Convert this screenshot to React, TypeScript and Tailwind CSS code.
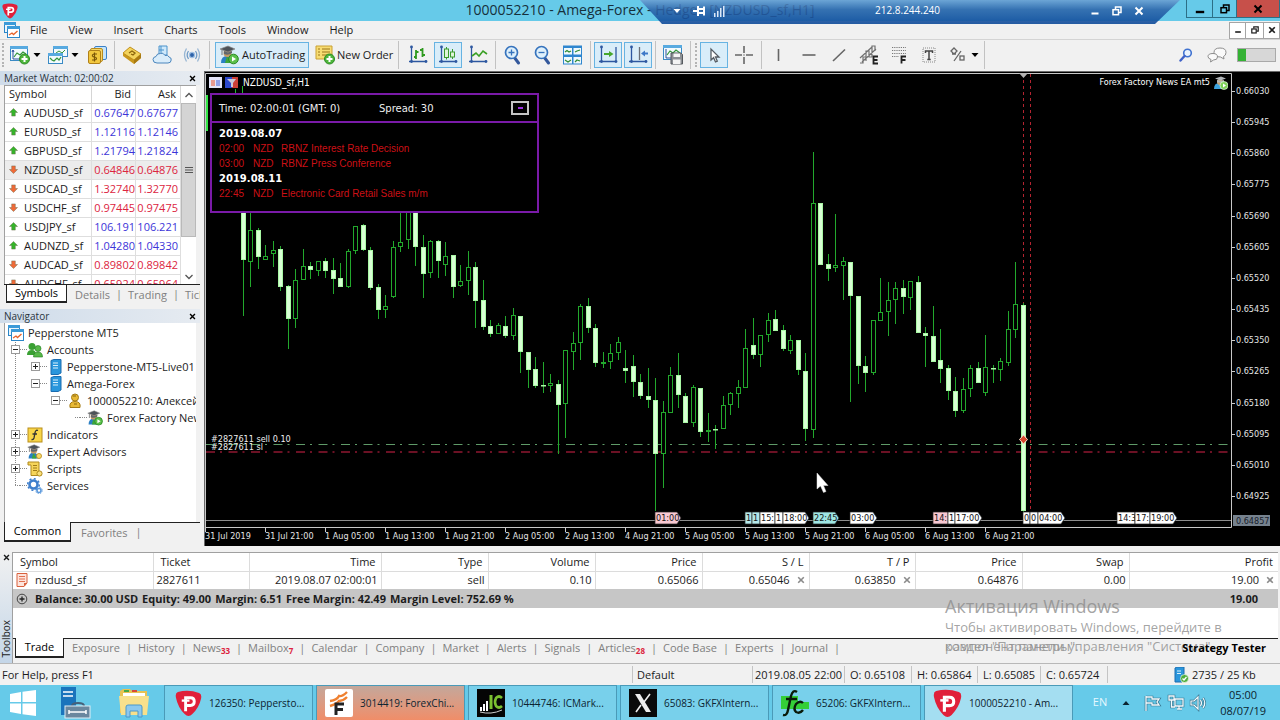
import React from "react";

type Kids = { children?: React.ReactNode };

/* ---------- icons ---------- */

function Logo({ className }: { className: string }) {
  return (
    <svg viewBox="0 0 28 28" className={className} aria-hidden="true">
      <path d="M3 2Q14-1 25 3Q28 4 27 9Q25 18 18 25Q14 29 10 25Q3 18 1 8Q0 3 3 2Z" fill="#e0203a" />
      <path d="M11 22V8H16Q20 8 20 12Q20 16 16 16H12" fill="none" stroke="#fff" strokeWidth="3" />
      <path d="M7 11H15" stroke="#fff" strokeWidth="2.4" />
    </svg>
  );
}

function MtIcon({ className }: { className: string }) {
  return (
    <svg viewBox="0 0 16 16" className={className} aria-hidden="true">
      <rect x="0.5" y="0.5" width="11" height="10" fill="#eaf6fd" stroke="#2b86c8" />
      <rect x="0" y="0" width="12" height="3" fill="#3c9ad8" />
      <rect x="3.5" y="4.5" width="12" height="11" fill="#fff" stroke="#2b86c8" />
      <rect x="3" y="4" width="13" height="3" fill="#3c9ad8" />
      <path d="M5 13L8 11L9.500 12.500L13.500 9" fill="none" stroke="#e8622a" strokeWidth="1.300" />
    </svg>
  );
}

function Caret({ className = "w-2 h-1 text-black" }: { className?: string }) {
  return (
    <svg viewBox="0 0 8 4" className={className} aria-hidden="true">
      <path d="M0.500 0H7.500L4 4Z" fill="currentColor" />
    </svg>
  );
}

function Ico({ children }: Kids) {
  return (
    <svg viewBox="0 0 20 20" className="h-5 w-5 shrink-0" aria-hidden="true">
      {children}
    </svg>
  );
}

const NewChart = () => (
  <Ico>
    <rect x="0.5" y="1.5" width="17" height="14" fill="#f2fafe" stroke="#3a8ac4" />
    <rect x="0" y="1" width="18" height="3" fill="#58aae0" />
    <path d="M3 5V14H16M2 7L3 5L4 7M14 13L16 14" fill="none" stroke="#2c4f9c" />
    <path d="M4 12L7 8L10 10L13 7L16 9" fill="none" stroke="#34963a" strokeWidth="1.200" />
    <circle cx="14.500" cy="14" r="5" fill="#4db53a" stroke="#2a8a22" />
    <path d="M14.500 11V17M11.500 14H17.500" stroke="#fff" strokeWidth="2" />
  </Ico>
);
const Profiles = () => (
  <Ico>
    <rect x="5.500" y="1.500" width="14" height="10" fill="#f2fafe" stroke="#3a8ac4" />
    <rect x="5" y="1" width="15" height="3" fill="#58aae0" />
    <path d="M8 8L11 6L14 8L17 5" fill="none" stroke="#34963a" />
    <rect x="0.500" y="8.500" width="14" height="10" fill="#f2fafe" stroke="#3a8ac4" />
    <rect x="0" y="8" width="15" height="3" fill="#58aae0" />
    <path d="M2 13L4 15L6 16L9 13L11 15L13 12" fill="none" stroke="#34963a" strokeWidth="1.200" />
  </Ico>
);
const Symbols = () => (
  <Ico>
    <rect x="7.500" y="1.500" width="12" height="13" rx="1.500" fill="#c4e4fa" stroke="#3a80c8" />
    <rect x="3.500" y="3.500" width="12" height="13" rx="1.500" fill="#f6d76a" stroke="#b88a1c" />
    <rect x="1.500" y="5.500" width="12" height="13" rx="1.500" fill="#f2c73e" stroke="#b08018" />
    <path d="M10 9H7Q5 9.500 5.500 11Q6 12 7.500 12Q9.500 12.300 9.500 13.500Q9.500 15 7.500 15H5M7.500 7.500V16.500" fill="none" stroke="#7a5508" strokeWidth="1.200" />
  </Ico>
);
const Ticket = () => (
  <Ico>
    <path d="M1 8L8 2L19 9V13L12 19L1 11Z" fill="#c9971c" />
    <path d="M1 8L8 2L19 9L12 15Z" fill="#f3d35c" stroke="#b98616" strokeWidth="0.800" />
    <path d="M7 8L10 6L13 8L11 10L9 9" fill="none" stroke="#8a640c" strokeWidth="1.300" />
    <path d="M12 15V19L19 13V9Z" fill="#a87a12" />
  </Ico>
);
const Cloud = () => (
  <Ico>
    <path d="M7 1H15V10H7Z" fill="#cfe9fb" stroke="#4a93cc" />
    <path d="M9 1V10M7 5H12" stroke="#4a93cc" />
    <path d="M5 18Q1 18 1 14.500Q1 12 4 11.500Q5 8 8.500 8.500Q11 7 13 10.500Q16 9.500 17 12Q19.500 12.500 19.200 15Q19 18 16 18Z" fill="#d9ecfa" stroke="#4b86bd" />
  </Ico>
);
const Signal = () => (
  <Ico>
    <g fill="none" stroke="#6f9bc6" strokeWidth="1.300">
      <circle cx="10" cy="10" r="2.600" fill="#2d62a8" stroke="#9fc0e4" />
      <path d="M6.500 6Q3.800 10 6.500 14M13.500 6Q16.200 10 13.500 14" />
      <path d="M4.500 3.500Q0.500 10 4.500 16.500M15.500 3.500Q19.500 10 15.500 16.500" opacity="0.700" />
    </g>
  </Ico>
);
function Expert({ badge, className = "h-5 w-5" }: { badge: "play" | "dot"; className?: string }) {
  return (
    <svg viewBox="0 0 20 20" className={`${className} shrink-0`} aria-hidden="true">
      <path d="M2 18Q2 11 8 11Q14 11 14 18Z" fill="#2a7fc4" />
      <path d="M8 11L12 18H6Z" fill="#3da53a" />
      <circle cx="8.500" cy="8" r="4" fill="#c79a64" />
      <path d="M1 4L9 1L16 4L9 7Z" fill="#4c5258" stroke="#8a8a8a" strokeWidth="0.700" />
      <path d="M5 6V9Q9 11 13 8V6L9 7.500Z" fill="#62686e" />
      <path d="M3 4V10" stroke="#777" />
      {badge === "play" ? (
        <>
          <circle cx="14.500" cy="14" r="4.800" fill="#5cc04a" stroke="#2a8a22" />
          <path d="M13 11.500L17 14L13 16.500Z" fill="#fff" />
        </>
      ) : (
        <circle cx="15" cy="15" r="3.200" fill="#f7d968" stroke="#b98a1c" />
      )}
    </svg>
  );
}
const NewOrder = () => (
  <Ico>
    <path d="M1 1H17V14H1Z" fill="#f7dc72" stroke="#c9a032" />
    <path d="M3 4H5M7 4H15M3 7H5M7 7H15M3 10H5M7 10H12" stroke="#9a741a" />
    <circle cx="14.500" cy="14" r="5" fill="#4db53a" stroke="#2a8a22" />
    <path d="M14.500 11V17M11.500 14H17.500" stroke="#fff" strokeWidth="2" />
  </Ico>
);
const Axes = () => (
  <>
    <path d="M3.500 1.500V17M1 16.500H18" fill="none" stroke="#2d57a0" strokeWidth="1.300" />
    <circle cx="3.500" cy="2" r="1.400" fill="#2d57a0" />
    <circle cx="3.500" cy="16.500" r="1.400" fill="#2d57a0" />
    <circle cx="18" cy="16.500" r="1.400" fill="#2d57a0" />
  </>
);
const Bars = () => (
  <Ico>
    <Axes />
    <path d="M8 5V14M6 12H8M8 7H10.500M14.500 3V12M12 5H14.500M14.500 10H17" fill="none" stroke="#2f9a20" strokeWidth="1.800" />
  </Ico>
);
const Candles = () => (
  <Ico>
    <Axes />
    <path d="M8.500 2V14.500M14.500 4V14" stroke="#3a9a2c" />
    <rect x="6.500" y="4" width="4" height="8.500" fill="#dff5da" stroke="#3a9a2c" />
    <rect x="12.500" y="7" width="4" height="5" fill="#dff5da" stroke="#3a9a2c" />
  </Ico>
);
const LineIco = () => (
  <Ico>
    <Axes />
    <path d="M4 11L8 8L11 11L15 6L19 9" fill="none" stroke="#3aa024" strokeWidth="1.600" />
  </Ico>
);
function Zoom({ plus }: { plus?: boolean }) {
  return (
    <Ico>
      <path d="M11 12L15.500 18" stroke="#33589c" strokeWidth="3" strokeLinecap="round" />
      <circle cx="8.500" cy="7.500" r="6" fill="#dff0fb" stroke="#3673bd" strokeWidth="1.700" />
      <path d={plus ? "M5.500 7.500H11.500M8.500 4.500V10.500" : "M5.500 7.500H11.500"} stroke="#3673bd" strokeWidth="1.300" />
    </Ico>
  );
}
const Tile = () => (
  <Ico>
    <rect x="0" y="0.500" width="19" height="19" fill="#2f86cf" />
    <path d="M1 3H9V9.500H1ZM10.500 3H18V9.500H10.500ZM1 12H9V18.500H1ZM10.500 12H18V18.500H10.500Z" fill="#eff9fd" />
    <path d="M2 7L4 5.500L6 7L8 6M12 7L14 6L17 5M2 15L5 17L8 15M12 17L14 15L17 16" fill="none" stroke="#2f8b34" strokeWidth="1.200" />
  </Ico>
);
const AutoScroll = () => (
  <Ico>
    <Axes />
    <path d="M18 2V15" stroke="#2d57a0" strokeWidth="1.300" />
    <path d="M6 9H12" stroke="#46a72c" strokeWidth="2" />
    <path d="M11 6L15.500 9L11 12Z" fill="#46a72c" />
  </Ico>
);
const Shift = () => (
  <Ico>
    <Axes />
    <path d="M11.500 2V15" stroke="#6a6f78" strokeWidth="1.300" />
    <path d="M20 8.500H16" stroke="#3c78c8" strokeWidth="2" />
    <path d="M17 5.500L13 8.500L17 11.500Z" fill="#3c78c8" />
  </Ico>
);
const Template = () => (
  <Ico>
    <rect x="0.500" y="0.500" width="18" height="14" fill="#f2fafe" stroke="#3a8ac4" />
    <rect x="0" y="0" width="19" height="3" fill="#58aae0" />
    <path d="M3 4V13H9" fill="none" stroke="#2c4f9c" />
    <path d="M4 10L7 6L10 8L13 5L17 8" fill="none" stroke="#34963a" strokeWidth="1.200" />
    <path d="M8 8H18L19.500 9.500V19H8Z" fill="#8b8f94" stroke="#55595e" />
    <path d="M10.500 8.500H17V12H10.500ZM10 14.500H17.500V19H10Z" fill="#f4f4f4" />
  </Ico>
);
const Cursor = () => (
  <Ico>
    <path d="M7 4V15L9.600 12.700L11.500 17L13.300 16.200L11.500 12H15Z" fill="#fff" stroke="#555c64" strokeWidth="1.300" />
  </Ico>
);
const Cross = () => (
  <Ico>
    <path d="M10 1V8M10 12V19M1 10H8M12 10H19M9.500 10H10.500" stroke="#666" strokeWidth="1.600" />
  </Ico>
);
const VLine = () => <Ico><path d="M9.500 4V16" stroke="#666" strokeWidth="1.600" /></Ico>;
const HLine = () => <Ico><path d="M3.500 10H16.500" stroke="#666" strokeWidth="1.600" /></Ico>;
const Trend = () => <Ico><path d="M4 16L16 4.500" stroke="#666" strokeWidth="1.600" /></Ico>;
const Elliott = () => (
  <Ico>
    <path d="M1 13L13 2M3 17L17 4M1 18H4V12H7V16M7 12V6H10V12H13V5M13 8V1H16V6" fill="none" stroke="#707070" strokeWidth="1.200" />
    <path d="M19 11.500H14.500V18.500H19M14.500 15H18.500" fill="none" stroke="#222" strokeWidth="1.800" />
  </Ico>
);
const Fibo = () => (
  <Ico>
    <path d="M3 2.500H17M3 5.500H17M3 8.500H17M3 11.500H10" stroke="#777" strokeWidth="1.200" strokeDasharray="1.200 1" />
    <path d="M17 11.500H12.500V18.500M12.500 15H16.500" fill="none" stroke="#222" strokeWidth="1.800" />
  </Ico>
);
const TextTool = () => (
  <Ico>
    <rect x="4" y="3" width="12" height="14" fill="none" stroke="#888" strokeDasharray="1 1" />
    <path d="M6.500 8V6H13.500V8M10 6V14.500M8.300 14.500H11.700" fill="none" stroke="#444" strokeWidth="1.500" />
  </Ico>
);
const Shapes = () => (
  <Ico>
    <path d="M3 6L6 3L9 6L6 9ZM4 9H8M6 16L13 6" fill="none" stroke="#666" strokeWidth="1.300" />
    <rect x="12" y="11" width="4" height="4" fill="none" stroke="#666" strokeWidth="1.300" />
  </Ico>
);

/* ---------- title and menu ---------- */

function RestoreGlyph({ className }: { className: string }) {
  return (
    <svg viewBox="0 0 10 10" className={className} aria-hidden="true">
      <path d="M3.500 3V1H9V6.500H7" fill="none" stroke="currentColor" strokeWidth="1.500" />
      <rect x="1" y="3.700" width="5.500" height="5" fill="none" stroke="currentColor" strokeWidth="1.500" />
    </svg>
  );
}
function CrossGlyph({ className }: { className: string }) {
  return (
    <svg viewBox="0 0 10 10" className={className} aria-hidden="true">
      <path d="M1.500 1.500L8.500 8.500M8.500 1.500L1.500 8.500" stroke="currentColor" strokeWidth="2" />
    </svg>
  );
}
function MinGlyph({ className }: { className: string }) {
  return (
    <svg viewBox="0 0 10 10" className={className} aria-hidden="true">
      <path d="M1.500 7.500H8.500" stroke="currentColor" strokeWidth="2" />
    </svg>
  );
}

function TitleBar() {
  return (
    <header className="relative z-10 flex h-[21px] shrink-0 items-center bg-[#66cae9]">
      <Logo className="ml-0.5 h-4 w-4" />
      <h1 className="absolute inset-x-0 top-0 whitespace-nowrap text-center text-[14px] leading-[20px] text-[#16303c]">
        1000052210 - Amega-Forex - Hedge - [NZDUSD_sf,H1]
      </h1>
      <div className="absolute left-1/2 top-0 h-6 w-[540px] bg-gradient-to-b from-[#6d9fd2]/85 via-[#2c62a8]/85 via-40% to-[#0c4a9a]/90 [clip-path:polygon(0_0,100%_0,515px_100%,22px_100%)]">
        <div className="flex h-[21px] items-center text-white">
          <button aria-label="Connection menu" className="ml-8 flex w-[9px] justify-center"><Caret className="h-1 w-2" /></button>
          <button aria-label="Pin bar" className="ml-3">
            <svg viewBox="0 0 14 12" className="h-3 w-3.5" aria-hidden="true"><path d="M0 6H5M5 1V11M5 4H11V8H5M11 1.500V10.500" fill="none" stroke="currentColor" strokeWidth="2" /></svg>
          </button>
          <svg viewBox="0 0 12 12" className="ml-1.5 h-3 w-3" aria-hidden="true"><path d="M1 8H2.500V12H1ZM4 6H5.500V12H4ZM7 3H8.500V12H7ZM10 1H11.500V12H10Z" fill="#dce8f8" /></svg>
          <span className="ml-[150px] text-[10px]">212.8.244.240</span>
          <div className="ml-auto mr-9 flex gap-3">
            <button aria-label="Minimize session"><MinGlyph className="h-[10px] w-[10px]" /></button>
            <button aria-label="Restore session"><RestoreGlyph className="h-[10px] w-[10px]" /></button>
            <button aria-label="Close session"><CrossGlyph className="h-[10px] w-[10px]" /></button>
          </div>
        </div>
      </div>
      <div className="relative ml-auto flex h-[18px] self-start border-x border-b border-[#2c6f86] text-black">
        <button aria-label="Minimize" className="flex w-[26px] items-center justify-center border-r border-[#2c6f86]"><MinGlyph className="h-3 w-3" /></button>
        <button aria-label="Restore" className="flex w-6 items-center justify-center border-r border-[#2c6f86]"><RestoreGlyph className="h-[10px] w-[10px]" /></button>
        <button aria-label="Close" className="flex w-[42px] items-center justify-center bg-[#c7504a]"><CrossGlyph className="h-[10px] w-[10px]" /></button>
      </div>
    </header>
  );
}

const menus = ["File", "View", "Insert", "Charts", "Tools", "Window", "Help"];

function MenuBar() {
  return (
    <nav className="flex h-[19px] shrink-0 items-center border-b border-[#d4d4d4] bg-[#f1f1f1] pl-1 text-[11px]">
      <MtIcon className="h-4 w-4" />
      <div className="ml-2.5 flex gap-[21px]">
        {menus.map((m) => (
          <button key={m} className="leading-4">{m}</button>
        ))}
      </div>
      <div className="ml-auto flex h-[17px]">
        <button aria-label="Minimize chart" className="flex w-[17px] items-center justify-center border border-[#a5a5a5] bg-white"><MinGlyph className="h-2 w-2" /></button>
        <button aria-label="Restore chart" className="flex w-[17px] items-center justify-center border-y border-[#a5a5a5] bg-white"><RestoreGlyph className="h-2 w-2" /></button>
        <button aria-label="Close chart" className="flex w-[17px] items-center justify-center border border-[#a5a5a5] bg-white"><CrossGlyph className="h-2 w-2" /></button>
      </div>
    </nav>
  );
}

/* ---------- toolbar ---------- */

function Sep({ wide }: { wide?: boolean }) {
  return <span className={`h-7 w-px shrink-0 bg-[#c2c2c2] ${wide ? "mx-1" : "mx-0.5"}`} />;
}
function Grip() {
  return <span className="mx-0.5 h-6 w-0.5 shrink-0 border-l-2 border-dotted border-[#b4b4b4]" />;
}
function Tool({ label, on, children }: Kids & { label: string; on?: boolean }) {
  return (
    <button aria-label={label} aria-pressed={!!on} className="flex h-7 w-[30px] shrink-0 items-center justify-center p-px">
      <span className={`flex h-[26px] w-7 items-center justify-center border ${on ? "border-[#67b3e2] bg-[#d9edf9]" : "border-transparent"}`}>{children}</span>
    </button>
  );
}
function Drop({ label, children }: Kids & { label: string }) {
  return (
    <button aria-label={label} className="flex h-7 w-[38px] shrink-0 items-center gap-[3px] pl-1">
      {children}
      <Caret />
    </button>
  );
}

function Toolbar() {
  return (
    <div className="flex h-[30px] shrink-0 items-center bg-[#f1f1f1]">
      <Grip />
      <Drop label="New chart"><NewChart /></Drop>
      <Drop label="Profiles"><Profiles /></Drop>
      <Tool label="Symbols"><Symbols /></Tool>
      <Sep />
      <Tool label="Depth of market"><Ticket /></Tool>
      <Tool label="Virtual hosting"><Cloud /></Tool>
      <Tool label="Signals"><Signal /></Tool>
      <Sep />
      <button className="ml-[3px] flex h-[26px] w-[94px] shrink-0 items-center gap-[3px] whitespace-nowrap border border-[#67b3e2] bg-[#d9edf9] pl-[3px] text-[11px]">
        <Expert badge="play" />AutoTrading
      </button>
      <button className="ml-[3px] flex h-[26px] w-[82px] shrink-0 items-center gap-[2px] whitespace-nowrap pl-[3px] text-[11px]">
        <NewOrder />New Order
      </button>
      <Sep wide />
      <Tool label="Bar chart"><Bars /></Tool>
      <Tool label="Candlesticks" on><Candles /></Tool>
      <Tool label="Line chart"><LineIco /></Tool>
      <Sep />
      <Tool label="Zoom in"><Zoom plus /></Tool>
      <Tool label="Zoom out"><Zoom /></Tool>
      <Tool label="Tile windows"><Tile /></Tool>
      <Sep />
      <Tool label="Auto scroll" on><AutoScroll /></Tool>
      <Tool label="Chart shift" on><Shift /></Tool>
      <Sep />
      <Tool label="Templates"><Template /></Tool>
      <Sep />
      <Grip />
      <Tool label="Cursor" on><Cursor /></Tool>
      <Tool label="Crosshair"><Cross /></Tool>
      <Sep />
      <Tool label="Vertical line"><VLine /></Tool>
      <Tool label="Horizontal line"><HLine /></Tool>
      <Tool label="Trendline"><Trend /></Tool>
      <Tool label="Elliott wave"><Elliott /></Tool>
      <Tool label="Fibonacci"><Fibo /></Tool>
      <Tool label="Text"><TextTool /></Tool>
      <Drop label="Objects"><Shapes /></Drop>
      <Sep />
      <div className="ml-auto flex items-center pr-1">
        <button aria-label="Search" className="mr-3.5">
          <svg viewBox="0 0 14 14" className="h-3.5 w-3.5" aria-hidden="true">
            <circle cx="8.500" cy="5" r="3.800" fill="#eaf3fd" stroke="#3f72d0" strokeWidth="1.600" />
            <path d="M5.500 8L1.500 12.500" stroke="#3f62c8" strokeWidth="2.400" strokeLinecap="round" />
          </svg>
        </button>
        <button aria-label="Community" className="mr-2.5">
          <svg viewBox="0 0 20 16" className="h-4 w-5" aria-hidden="true">
            <path d="M13 1Q19 1 19 5.500Q19 8.500 16.500 9.500L17 12L13.500 10Q7 10 7 5.500Q7 1 13 1Z" fill="#fafafa" stroke="#8d8d8d" />
            <path d="M6 6.500Q10.500 6.500 10.500 10Q10.500 13 6.500 13L3.500 15L4 12.500Q1 11.500 1 9.500Q1 6.500 6 6.500Z" fill="#fafafa" stroke="#8d8d8d" />
          </svg>
        </button>
        <div className="h-3.5 w-[39px] border border-[#a9a9a9] bg-[#d7d7d7]"><div className="h-full w-2 bg-[#34b234]" /></div>
      </div>
    </div>
  );
}

/* ---------- left panels ---------- */

const quotes: [string, string, string, boolean][] = [
  ["AUDUSD_sf", "0.67647", "0.67677", true],
  ["EURUSD_sf", "1.12116", "1.12146", true],
  ["GBPUSD_sf", "1.21794", "1.21824", true],
  ["NZDUSD_sf", "0.64846", "0.64876", false],
  ["USDCAD_sf", "1.32740", "1.32770", false],
  ["USDCHF_sf", "0.97445", "0.97475", false],
  ["USDJPY_sf", "106.191", "106.221", true],
  ["AUDNZD_sf", "1.04280", "1.04330", true],
  ["AUDCAD_sf", "0.89802", "0.89842", false],
  ["AUDCHF_sf", "0.65924", "0.65964", false],
];

function PanelTitle({ children }: Kids) {
  return (
    <div className="flex h-[14px] shrink-0 items-center justify-between bg-gradient-to-r from-[#cfdcea] to-[#e6ebf1] pl-1 pr-1 text-[10px] leading-[13px] text-[#2a3440]">
      <h2>{children}</h2>
      <button aria-label="Close panel"><CrossGlyph className="h-[7px] w-[7px] text-black" /></button>
    </div>
  );
}

function MarketWatch() {
  return (
    <section className="flex h-[232px] shrink-0 flex-col">
      <PanelTitle>Market Watch: 02:00:02</PanelTitle>
      <div className="mx-1 flex min-h-0 flex-1 overflow-hidden border-l border-t border-[#a0a0a0] bg-white">
        <div className="min-w-0 flex-1 overflow-hidden">
          <table className="w-full table-fixed border-collapse text-[11px]">
            <colgroup><col /><col className="w-[44px]" /><col className="w-[45px]" /></colgroup>
            <thead>
              <tr className="h-[17px] leading-4 [&>th]:border-b [&>th]:border-r [&>th]:border-[#d5d5d5] [&>th]:p-0 [&>th]:font-normal">
                <th className="text-left"><span className="pl-1">Symbol</span></th>
                <th className="text-right"><span className="pr-1">Bid</span></th>
                <th className="text-right"><span className="pr-1">Ask</span></th>
              </tr>
            </thead>
            <tbody>
              {quotes.map(([s, b, a, up]) => (
                <tr key={s} className={`h-[19px] leading-4 ${s === "NZDUSD_sf" ? "bg-[#ececec]" : ""} [&>td]:border-b [&>td]:border-r [&>td]:border-[#dedede] [&>td]:p-0`}>
                  <td>
                    <span className="flex items-center gap-1.5 pl-1">
                      <svg viewBox="0 0 10 10" className={`h-[9px] w-[9px] ${up ? "text-[#35b42a]" : "rotate-180 text-[#f06a38]"}`} aria-hidden="true">
                        <path d="M5 0.500L9.500 5H7V9H3V5H0.500Z" fill="currentColor" stroke="#6a6a4a" strokeWidth="0.500" />
                      </svg>
                      {s}
                    </span>
                  </td>
                  <td className={`text-right ${up ? "text-[#3c34d8]" : "text-[#dc2440]"}`}>{b}</td>
                  <td className={`text-right ${up ? "text-[#3c34d8]" : "text-[#dc2440]"}`}><span className="pr-0.5">{a}</span></td>
                </tr>
              ))}
            </tbody>
          </table>
        </div>
        <div className="flex w-[15px] shrink-0 flex-col items-center bg-white">
          <button aria-label="Scroll up" className="flex h-[17px] items-center"><svg viewBox="0 0 8 6" className="h-1.5 w-2" aria-hidden="true"><path d="M0.500 5L4 1.500L7.500 5" fill="none" stroke="#555" strokeWidth="1.300" /></svg></button>
          <div className="flex h-[134px] w-full items-center justify-center border border-[#b9b9b9] bg-[#d4d4d4]">
            <svg viewBox="0 0 8 8" className="h-2 w-2" aria-hidden="true"><path d="M0 1.500H8M0 4H8M0 6.500H8" stroke="#555" /></svg>
          </div>
          <button aria-label="Scroll down" className="mt-auto flex h-[15px] items-center"><svg viewBox="0 0 8 6" className="h-1.5 w-2" aria-hidden="true"><path d="M0.500 1L4 4.500L7.500 1" fill="none" stroke="#555" strokeWidth="1.300" /></svg></button>
        </div>
      </div>
      <div className="ml-1 flex h-[19px] shrink-0 overflow-hidden whitespace-nowrap border-t border-[#222] text-[11px] leading-[17px] text-[#808080]">
        <button className="ml-0.5 w-[61px] shrink-0 border-x border-b-2 border-[#222] bg-white leading-4 text-black">Symbols</button>
        <button className="ml-2 shrink-0">Details</button><span className="mx-1.5">|</span>
        <button className="shrink-0">Trading</button><span className="mx-1.5">|</span>
        <button className="shrink-0">Ticks</button>
      </div>
    </section>
  );
}

function TreeSvg({ children }: Kids) {
  return <svg viewBox="0 0 16 16" className="h-4 w-4 shrink-0" aria-hidden="true">{children}</svg>;
}
const Server = () => (
  <TreeSvg>
    <path d="M4 1.500L7 0.500H14V14L11 15.500H4Z" fill="#2a96dc" stroke="#1a6cb0" />
    <path d="M6 4H11M6 6.500H11M6 9H11" stroke="#d8f0fc" strokeWidth="1.200" />
  </TreeSvg>
);

type Node = { text: string; level: number; box?: "+" | "-"; icon: React.ReactNode };
const tree: Node[] = [
  { text: "Pepperstone MT5", level: 0, icon: <MtIcon className="h-4 w-4 shrink-0" /> },
  {
    text: "Accounts", level: 1, box: "-",
    icon: (
      <TreeSvg>
        <circle cx="5" cy="4.500" r="3.500" fill="#3aa033" /><path d="M0 13Q0 8 5 8Q9 8 9 13Z" fill="#3aa033" />
        <circle cx="11" cy="6.500" r="3" fill="#56b848" stroke="#1f7a1c" strokeWidth="0.600" /><path d="M6.500 15Q6.500 10 11 10Q15.500 10 15.500 15Z" fill="#56b848" stroke="#1f7a1c" strokeWidth="0.600" />
      </TreeSvg>
    ),
  },
  { text: "Pepperstone-MT5-Live01", level: 2, box: "+", icon: <Server /> },
  { text: "Amega-Forex", level: 2, box: "-", icon: <Server /> },
  {
    text: "1000052210: Алексей П", level: 3, box: "-",
    icon: (
      <TreeSvg>
        <circle cx="8" cy="4.500" r="3.500" fill="#e8b935" stroke="#a37a14" /><path d="M3 14.500Q2 8.500 8 8.500Q14 8.500 13 14.500Z" fill="#e8b935" stroke="#a37a14" />
        <path d="M6 3H9M7 11H10" stroke="#8a640c" />
      </TreeSvg>
    ),
  },
  { text: "Forex Factory New", level: 4, icon: <Expert badge="play" className="h-4 w-4" /> },
  {
    text: "Indicators", level: 1, box: "+",
    icon: (
      <TreeSvg>
        <rect x="1" y="1" width="14" height="14" fill="#f8d548" stroke="#b98e1a" />
        <path d="M11 3.500Q8.500 2.500 8 6L7 11Q6.500 13 4.500 12.500M5.500 7H10" fill="none" stroke="#333" strokeWidth="1.300" />
      </TreeSvg>
    ),
  },
  { text: "Expert Advisors", level: 1, box: "+", icon: <Expert badge="dot" className="h-4 w-4" /> },
  {
    text: "Scripts", level: 1, box: "+",
    icon: (
      <TreeSvg>
        <path d="M1 1H12V12H14V14.500H4V4H1Z" fill="#f6d55a" stroke="#b08a1e" /><path d="M6 4.500H10M6 7H10M6 9.500H10" stroke="#a07a18" />
        <circle cx="12.500" cy="12.500" r="2.600" fill="#f9df7a" stroke="#b08a1e" />
      </TreeSvg>
    ),
  },
  {
    text: "Services", level: 1,
    icon: (
      <TreeSvg>
        <circle cx="6.500" cy="6.500" r="4" fill="none" stroke="#3f7fcc" strokeWidth="2.600" />
        <circle cx="6.500" cy="6.500" r="5.800" fill="none" stroke="#3f7fcc" strokeWidth="1.500" strokeDasharray="2 2.500" />
        <circle cx="12" cy="12.500" r="2" fill="none" stroke="#5a98dc" strokeWidth="1.600" /><circle cx="12" cy="12.500" r="3.300" fill="none" stroke="#5a98dc" strokeDasharray="1.200 1.400" />
      </TreeSvg>
    ),
  },
];
const indents = ["pl-[3px]", "pl-[6px]", "pl-[26px]", "pl-[46px]", "pl-[66px]"];

function Navigator() {
  return (
    <section className="flex min-h-0 flex-1 flex-col">
      <PanelTitle>Navigator</PanelTitle>
      <ul className="relative mx-1 min-h-0 flex-1 overflow-hidden border-l border-[#a0a0a0] bg-white pt-px">
        <li aria-hidden="true" className="absolute left-2.5 top-4 h-[146px] border-l border-dotted border-[#888]" />
        {tree.map((n) => (
          <li key={n.text} className={`relative flex h-[17px] items-center whitespace-nowrap text-[11px] leading-4 ${indents[n.level]}`}>
            {n.level > 0 && (
              <span className="flex w-4 shrink-0 items-center">
                {n.box ? (
                  <button aria-label={n.box === "+" ? `Expand ${n.text}` : `Collapse ${n.text}`} className="h-[9px] w-[9px] border border-[#9a9a9a] bg-white">
                    <svg viewBox="0 0 7 7" className="h-[7px] w-[7px]" aria-hidden="true"><path d={n.box === "+" ? "M1 3.500H6M3.500 1V6" : "M1 3.500H6"} stroke="#222" /></svg>
                  </button>
                ) : (
                  <span className="ml-1 w-[5px] border-t border-dotted border-[#888]" />
                )}
                <span className="flex-1 border-t border-dotted border-[#888]" />
              </span>
            )}
            {n.icon}
            <span className="pl-1">{n.text}</span>
          </li>
        ))}
      </ul>
      <div className="mb-1 ml-1 flex h-5 shrink-0 border-t border-[#222] text-[11px] leading-[18px] text-[#808080]">
        <button className="-mt-px w-[67px] border-x border-b-2 border-[#222] bg-white text-black">Common</button>
        <button className="ml-2.5">Favorites</button><span className="ml-2">|</span>
      </div>
    </section>
  );
}

/* ---------- chart ---------- */

/* high, body top, body bottom, low, filled */
const candles: [number, number, number, number, 0 | 1][] = [
  [205, 205, 260, 316, 1], [205, 230, 262, 287, 0], [228, 230, 257, 269, 1], [245, 256, 260, 260, 0], [241, 250, 254, 267, 0],
  [246, 249, 287, 291, 1], [285, 286, 319, 349, 1], [269, 280, 319, 328, 0], [249, 266, 280, 280, 0], [262, 266, 270, 279, 1],
  [261, 261, 271, 276, 0], [258, 261, 271, 278, 1], [258, 270, 279, 294, 1], [263, 278, 287, 287, 1], [249, 251, 287, 288, 0],
  [226, 226, 251, 254, 0], [224, 225, 250, 251, 1], [247, 250, 288, 290, 1], [284, 287, 310, 319, 1], [295, 306, 310, 318, 0],
  [241, 247, 297, 298, 0], [205, 242, 247, 252, 0], [205, 205, 240, 249, 0], [205, 205, 247, 266, 1], [235, 247, 274, 298, 1],
  [240, 241, 273, 278, 0], [240, 241, 261, 278, 1], [242, 256, 265, 276, 0], [255, 255, 287, 298, 1], [265, 281, 286, 287, 0],
  [251, 267, 281, 295, 0], [262, 267, 301, 328, 1], [280, 300, 327, 330, 1], [320, 326, 334, 337, 1], [323, 325, 334, 334, 0],
  [316, 326, 336, 338, 1], [308, 315, 336, 340, 0], [316, 316, 352, 373, 1], [352, 352, 370, 388, 1], [357, 369, 386, 388, 1],
  [362, 385, 386, 393, 1], [374, 383, 386, 392, 0], [380, 384, 405, 454, 1], [350, 350, 404, 438, 0], [332, 343, 352, 370, 0],
  [304, 306, 343, 360, 0], [298, 306, 328, 333, 1], [324, 328, 363, 367, 1], [352, 362, 364, 368, 0], [344, 353, 362, 369, 0],
  [337, 342, 353, 360, 0], [350, 368, 371, 383, 1], [355, 366, 382, 397, 1], [374, 382, 396, 399, 1], [368, 396, 400, 408, 1],
  [378, 400, 454, 511, 1], [401, 412, 454, 488, 0], [367, 375, 413, 413, 0], [353, 375, 395, 408, 1], [393, 396, 423, 423, 1],
  [385, 387, 423, 427, 0], [388, 388, 432, 437, 1], [413, 430, 432, 442, 0], [425, 429, 430, 449, 1], [396, 405, 429, 429, 0],
  [392, 393, 405, 415, 0], [380, 387, 394, 408, 0], [329, 348, 388, 388, 0], [318, 345, 355, 359, 1], [335, 335, 355, 367, 0],
  [313, 320, 335, 342, 0], [310, 319, 331, 331, 1], [325, 330, 349, 351, 1], [335, 340, 351, 354, 0], [340, 340, 370, 375, 1],
  [353, 371, 429, 441, 1], [152, 203, 430, 438, 0], [203, 203, 265, 265, 1], [254, 264, 269, 281, 1], [214, 265, 268, 272, 0],
  [257, 261, 266, 300, 0], [262, 262, 296, 402, 1], [296, 296, 366, 384, 1], [356, 366, 373, 392, 1], [320, 320, 373, 375, 0],
  [278, 312, 321, 321, 0], [282, 300, 312, 336, 0], [282, 288, 300, 324, 0], [280, 288, 297, 314, 1], [281, 281, 298, 310, 0],
  [276, 282, 333, 333, 1], [327, 333, 336, 367, 1], [306, 336, 362, 362, 1], [329, 360, 369, 383, 1], [365, 368, 391, 400, 1],
  [377, 391, 411, 417, 1], [378, 389, 411, 413, 0], [365, 368, 389, 397, 0], [362, 368, 383, 383, 1], [335, 367, 393, 396, 0],
  [365, 368, 369, 383, 1], [358, 361, 370, 381, 0], [311, 329, 363, 366, 0], [262, 304, 330, 338, 0], [303, 305, 511, 520, 1],
];

const times = ["31 Jul 2019", "31 Jul 21:00", "1 Aug 05:00", "1 Aug 13:00", "1 Aug 21:00", "2 Aug 05:00", "2 Aug 13:00", "4 Aug 21:00", "5 Aug 05:00", "5 Aug 13:00", "5 Aug 21:00", "6 Aug 05:00", "6 Aug 13:00", "6 Aug 21:00"];

/* x, width, label, fill, pointed end */
const flags: [number, number, string, string, boolean][] = [
  [655, 26, "01:00", "#f8c8d2", true],
  [745, 7, "1", "#b4e8ea", false], [752, 8, "1", "#b4e8ea", false], [760, 15, "15:", "#fff", false], [775, 8, "1", "#fff", false], [783, 26, "18:00", "#fff", true],
  [813, 26, "22:45", "#9ee6e4", true], [850, 27, "03:00", "#fff", true],
  [933, 15, "14:", "#f8c8d2", false], [948, 7, "1", "#fff", false], [955, 27, "17:00", "#fff", true],
  [1023, 7, "0", "#fff", false], [1030, 8, "0", "#fff", false], [1038, 27, "04:00", "#fff", true],
  [1117, 18, "14:3", "#fff", false], [1135, 15, "17:", "#fff", false], [1150, 27, "19:00", "#fff", true],
];

function PriceChart() {
  return (
    <svg className="block h-full w-full" role="img" aria-label="NZDUSD_sf hourly candlestick chart">
      <g transform="translate(-204 -71)">
        <path d="M205.500 527V73.500H1231.500V527.500H205" fill="none" stroke="#c8c8c8" />
        <path d="M206 520.500H1231" stroke="#8c8c8c" />
        <path d="M207 95V131" stroke="#36e848" strokeWidth="2" />
        <path d="M235.500 89V94M242.500 86V94" stroke="#22b830" />
        <path d="M206 444.500H1230" stroke="#5f9a68" strokeDasharray="9 5 2 6.500" />
        <path d="M206 452H1230" stroke="#8e1730" strokeWidth="1.500" strokeDasharray="9 5 2 6.500" />
        {candles.map(([h, t, b, l, f], i) => {
          const x = Math.round(242.7 + i * 7.5);
          return (
            <g key={i} stroke="#22a82c">
              <path d={`M${x + 0.5} ${h}V${t}M${x + 0.5} ${b}V${l}`} />
              {f ? <rect x={x - 1.5} y={t + 0.5} width="4" height={Math.max(b - t - 1, 0.5)} fill="#d8ffd4" stroke="#a8f8a4" /> : <rect x={x - 1.5} y={t + 0.5} width="4" height={b - t - 1} fill="#000" />}
            </g>
          );
        })}
        <path d="M1023.500 74V303M1030.500 74V520" stroke="#b42430" strokeDasharray="3 3" />
        <path d="M1019 73H1028L1023.500 78Z" fill="#b4b4b4" />
        <path d="M1023.500 435L1027.500 439.500L1023.500 444L1019.500 439.500Z" fill="#d8482e" stroke="#f6dccb" />
        <g fontSize="9" className="font-[DejaVu_Sans_Condensed,DejaVu_Sans,sans-serif]">
          {flags.map(([x, w, s, c, p]) => (
            <g key={`${x}`}>
              <path d={p ? `M${x} 512H${x + w - 4}L${x + w} 518L${x + w - 4} 524H${x}Z` : `M${x} 512H${x + w}V524H${x}Z`} fill={c} stroke="#222" strokeWidth="0.700" />
              <text x={x + 1} y="521" fill="#111">{s}</text>
            </g>
          ))}
          {times.map((t, i) => (
            <g key={t}>
              <path d={`M${205.5 + i * 60} 528V532`} stroke="#ccc" />
              <text x={205 + i * 60} y="539" fill="#e4e4e4">{t}</text>
            </g>
          ))}
          {Array.from({ length: 14 }, (_, i) => (
            <g key={i}>
              <path d={`M1232 ${Math.round(91 + i * 31.15) + 0.5}H1235`} stroke="#ccc" />
              <text x="1236" y={Math.round(94 + i * 31.15)} fill="#e4e4e4">{(0.6603 - i * 0.00085).toFixed(5)}</text>
            </g>
          ))}
          <rect x="1233" y="515" width="37" height="11" fill="#76828e" />
          <text x="1236" y="524" fill="#16202c">0.64857</text>
          <text x="211" y="442" fill="#eee">#2827611 sell 0.10</text>
          <text x="211" y="450" fill="#eee">#2827611 sl</text>
        </g>
        <path d="M817 473V489L820.500 486L823.500 492.500L826 491.500L823.500 485.500H828Z" fill="#fff" stroke="#ddd" strokeWidth="0.500" />
      </g>
    </svg>
  );
}

const news = [
  { day: "2019.08.07", items: [["02:00", "NZD", "RBNZ Interest Rate Decision"], ["03:00", "NZD", "RBNZ Press Conference"]] },
  { day: "2019.08.11", items: [["22:45", "NZD", "Electronic Card Retail Sales m/m"]] },
];

function NewsPanel() {
  return (
    <div className="absolute left-[5px] top-[21px] h-[120px] w-[329px] border-2 border-[#7a1aa8] bg-black">
      <div className="flex h-7 items-center border-b-2 border-[#7a1aa8] pl-[7px] pr-2 font-[DejaVu_Sans,sans-serif] text-[10px] text-[#eee]">
        <span className="w-[160px] whitespace-nowrap">Time: 02:00:01 (GMT: 0)</span>
        <span>Spread: 30</span>
        <button aria-label="Minimize news" className="ml-auto flex h-3.5 w-[18px] items-center justify-center border-2 border-[#c4c4c4]"><span className="h-0.5 w-[5px] bg-[#9a30e0]" /></button>
      </div>
      <div className="pl-[7px] pt-[3px]">
        {news.map((d) => (
          <div key={d.day}>
            <div className="font-[DejaVu_Sans,sans-serif] text-[10px] font-bold leading-[15px] text-white">{d.day}</div>
            {d.items.map(([t, c, n]) => (
              <div key={t} className="flex font-[Liberation_Sans,sans-serif] text-[10px] leading-[15px] text-[#cc1016]">
                <span className="w-[34px]">{t}</span><span className="w-7">{c}</span><span>{n}</span>
              </div>
            ))}
          </div>
        ))}
      </div>
    </div>
  );
}

function Chart() {
  return (
    <main className="relative min-w-0 flex-1 overflow-hidden border-l border-t border-[#6a6a6a] bg-black">
      <div className="absolute inset-0 -left-px -top-px"><PriceChart /></div>
      <div className="absolute left-1 top-[5px] flex items-center gap-1 font-[DejaVu_Sans_Condensed,DejaVu_Sans,sans-serif] text-[10px] leading-3 text-white">
        <svg viewBox="0 0 30 12" className="h-3 w-[30px]" aria-hidden="true">
          <rect x="0" y="0" width="13" height="11" fill="#e4e4f8" /><path d="M2 3H6V9H2Z" fill="#e89a90" /><path d="M7 3H11V9H7Z" fill="#90a0e8" />
          <rect x="16" y="0" width="7" height="11" fill="#2c48cc" /><rect x="23" y="0" width="6" height="11" fill="#cc4038" /><path d="M18 2H27L24 6V10H22V6Z" fill="#c8c8d8" />
        </svg>
        NZDUSD_sf,H1
      </div>
      <div className="absolute right-[52px] top-1 flex items-center gap-1 font-[DejaVu_Sans_Condensed,DejaVu_Sans,sans-serif] text-[9px] text-white">
        Forex Factory News EA mt5
        <svg viewBox="0 0 14 14" className="h-3.5 w-3.5" aria-hidden="true">
          <path d="M0 13Q0 7 5 7Q10 7 10 13Z" fill="#3ea4e0" /><circle cx="6" cy="6" r="3" fill="#c9a06c" /><path d="M1 2.500L7 0.500L12 2.500L6.500 4.500ZM3 4V6.500H10V4L6.500 5Z" fill="#b4b8bc" />
          <circle cx="10" cy="9.500" r="4" fill="#7ed058" stroke="#e8f8e0" strokeWidth="0.700" /><path d="M9 7.500L12 9.500L9 11.500Z" fill="#fff" />
        </svg>
      </div>
      <NewsPanel />
    </main>
  );
}

/* ---------- toolbox ---------- */

const heads: [string, string][] = [
  ["Symbol", ""], ["Ticket", "2827611"], ["Time", "2019.08.07 02:00:01"], ["Type", "sell"], ["Volume", "0.10"],
  ["Price", "0.65066"], ["S / L", "0.65046"], ["T / P", "0.63850"], ["Price", "0.64876"], ["Swap", "0.00"], ["Profit", "19.00"],
];
const closable = [6, 7, 10];
const boxTabs: [string, string?][] = [["Exposure"], ["History"], ["News", "33"], ["Mailbox", "7"], ["Calendar"], ["Company"], ["Market"], ["Alerts"], ["Signals"], ["Articles", "28"], ["Code Base"], ["Experts"], ["Journal"]];

function Toolbox() {
  return (
    <section className="relative flex h-[115px] shrink-0 border-b border-[#b8b8b8] bg-[#f1f1f1] pt-[3px]">
      <div className="flex w-3 shrink-0 flex-col items-center bg-gradient-to-b from-[#f1f1f1] to-[#c4d6e8]">
        <button aria-label="Close toolbox" className="mt-0.5 h-[7px]"><CrossGlyph className="h-[7px] w-[7px]" /></button>
        <h2 className="mb-1.5 mt-auto rotate-180 text-[10px] leading-3 [writing-mode:vertical-rl]">Toolbox</h2>
      </div>
      <div className="mr-0.5 flex min-w-0 flex-1 flex-col border-l border-t border-[#a0a0a0] bg-white">
        <table className="w-full table-fixed border-collapse text-[11px]">
          <colgroup>
            <col className="w-[140px]" /><col className="w-24" /><col className="w-[132px]" />
            <col className="w-[107px]" /><col className="w-[107px]" /><col className="w-[107px]" /><col className="w-[107px]" />
            <col className="w-[106px]" /><col className="w-[107px]" /><col className="w-[107px]" /><col />
          </colgroup>
          <thead>
            <tr className="h-[18px] leading-4">
              {heads.map(([h], i) => (
                <th key={i} className={`border-b border-r border-[#dcdcdc] py-0 font-normal last:border-r-0 ${i < 2 ? "pl-[7px] text-left" : "pr-[5px] text-right"}`}>{h}</th>
              ))}
            </tr>
          </thead>
          <tbody>
            <tr className="h-[18px] leading-4">
              {heads.map(([h, v], i) => (
                <td key={i} className={`border-r border-[#dcdcdc] py-0 last:border-r-0 ${i < 2 ? "pl-[3px] text-left" : "pr-[3px] text-right"}`}>
                  {i === 0 ? (
                    <span className="flex items-center gap-[7px]">
                      <svg viewBox="0 0 12 14" className="h-3.5 w-3" aria-hidden="true"><path d="M1 0.500H11V10L8 13.500H1Z" fill="#fde4dc" stroke="#d8603c" /><path d="M3 3.500H9M3 6H9M3 8.500H9" stroke="#e07050" /><path d="M11 10H8V13.500Z" fill="#d8603c" /></svg>
                      nzdusd_sf
                    </span>
                  ) : closable.includes(i) ? (
                    <span className="flex items-center justify-end gap-[7px] pr-px">
                      {v}
                      <button aria-label={`Remove ${h}`}><CrossGlyph className="h-2 w-2 text-[#8a8a8a]" /></button>
                    </span>
                  ) : v}
                </td>
              ))}
            </tr>
            <tr className="h-[19px] bg-[#c6c6c6] font-bold leading-4">
              <td colSpan={10} className="py-0 pl-[3px]">
                <span className="flex items-center gap-[7px]">
                  <svg viewBox="0 0 12 12" className="h-3 w-3" aria-hidden="true"><circle cx="6" cy="6" r="4.800" fill="none" stroke="#444" /><path d="M3.500 6H8.500M6 3.500V8.500" stroke="#222" strokeWidth="1.300" /></svg>
                  <span className="flex gap-1">
                    <span>Balance: 30.00 USD</span><span>Equity: 49.00</span><span>Margin: 6.51</span><span>Free Margin: 42.49</span><span>Margin Level: 752.69 %</span>
                  </span>
                </span>
              </td>
              <td className="py-0 pr-5 text-right">19.00</td>
            </tr>
          </tbody>
        </table>
        <div className="mt-auto flex h-[25px] items-start whitespace-nowrap border-t border-[#222] bg-[#f1f1f1] text-[11px] leading-[18px] text-[#808080]">
          <button className="-mt-px ml-0.5 h-5 w-[49px] border-x border-b-2 border-[#222] bg-white text-black">Trade</button>
          <div className="ml-2 flex">
            {boxTabs.map(([t, n]) => (
              <span key={t} className="flex">
                <button>{t}{n && <sub className="text-[8px] font-bold text-[#dc2440]">{n}</sub>}</button>
                <span className="mx-1.5">|</span>
              </span>
            ))}
          </div>
          <button className="relative z-10 ml-auto pr-3 font-bold text-black">Strategy Tester</button>
        </div>
      </div>
      <div className="pointer-events-none absolute right-[50px] top-[46px] w-[285px] whitespace-nowrap text-[#8c8c8c]/80">
        <p className="text-[18px] leading-[22px]">Активация Windows</p>
        <p className="text-[13px] leading-5">Чтобы активировать Windows, перейдите в</p>
        <div className="grid text-[13px] leading-[18px]">
          <p className="col-start-1 row-start-1">раздел "Параметры".</p>
          <p className="col-start-1 row-start-1">компонент панели управления "Система".</p>
        </div>
      </div>
    </section>
  );
}

function StatusBar() {
  return (
    <footer className="flex h-[21px] shrink-0 items-center bg-[#f1f1f1] text-[11px] leading-[17px]">
      <span className="flex-1 pl-0.5">For Help, press F1</span>
      <span className="w-[120px] border-l border-[#c4c4c4] pl-1">Default</span>
      <span className="w-[92px] whitespace-nowrap border-l border-[#c4c4c4] pl-0.5">2019.08.05 22:00</span>
      <span className="w-[67px] border-l border-[#c4c4c4] pl-[5px]">O: 0.65108</span>
      <span className="w-[66px] border-l border-[#c4c4c4] pl-[5px]">H: 0.65864</span>
      <span className="w-[63px] border-l border-[#c4c4c4] pl-[5px]">L: 0.65085</span>
      <span className="w-[67px] border-l border-[#c4c4c4] pl-[5px]">C: 0.65724</span>
      <span className="w-[66px] border-l border-[#c4c4c4]">&nbsp;</span>
      <span className="flex w-[107px] items-center gap-[3px]">
        <svg viewBox="0 0 16 16" className="h-4 w-4" aria-hidden="true"><path d="M2 1L4 0H11V13L9 15H2Z" fill="#2a96dc" stroke="#1a6cb0" /><path d="M4 4H8M4 6.500H8" stroke="#d8f0fc" /><circle cx="11.500" cy="11.500" r="4" fill="#4fae3c" stroke="#fff" strokeWidth="0.600" /><path d="M9.500 11.500L11 13L13.500 10" fill="none" stroke="#fff" strokeWidth="1.300" /></svg>
        2735 / 25 Kb
      </span>
    </footer>
  );
}

/* ---------- taskbar ---------- */

function Task({ text, tone, children }: Kids & { text: string; tone: string }) {
  return (
    <button className={`flex h-full w-[149px] shrink-0 items-center gap-[7px] whitespace-nowrap border-x border-t border-[#4a9ab8] pl-2 text-[10px] ${tone}`}>
      {children}
      {text}
    </button>
  );
}

function Taskbar() {
  return (
    <div className="flex h-[35px] shrink-0 items-center bg-[#66cae9] text-[#0c2430]">
      <button aria-label="Start" className="ml-[9px]">
        <svg viewBox="0 0 28 28" className="h-7 w-7" aria-hidden="true"><path d="M1 5L12 3V13H1ZM13.500 2.800L27 1V13H13.500ZM1 14.500H12V25L1 23ZM13.500 14.500H27V27L13.500 25.200Z" fill="#fff" /></svg>
      </button>
      <button aria-label="Server Manager" className="ml-[22px]">
        <svg viewBox="0 0 34 32" className="h-8 w-[34px]" aria-hidden="true">
          <path d="M2 0H17V22L8 28H2Z" fill="#1a74bc" /><path d="M4 5H14M4 9H14" stroke="#fff" strokeWidth="1.500" />
          <path d="M13 19Q13 16 19 16Q25 16 25 19" fill="none" stroke="#46617a" strokeWidth="2" />
          <rect x="6" y="19" width="25" height="12" fill="#6a879e" stroke="#e0eef6" /><path d="M10 25H27M10 23V27M27 23V27" stroke="#fff" strokeWidth="1.500" />
        </svg>
      </button>
      <button aria-label="File Explorer" className="ml-[25px]">
        <svg viewBox="0 0 32 32" className="h-8 w-8" aria-hidden="true">
          <path d="M2 4L5 2H12L14 4H29V26H2Z" fill="#e8c252" /><path d="M5 6H27V12H5Z" fill="#fff" /><path d="M6 3H11V5H6Z" fill="#48a848" /><path d="M14 3H19V5H14Z" fill="#d84a3a" />
          <path d="M1 9H31L29 28H3Z" fill="#f8e08c" /><path d="M8 30V20Q8 18 10 18H22Q24 18 24 20V30H20V24H12V30Z" fill="#8cc8ee" stroke="#4a98cc" />
        </svg>
      </button>
      <div className="ml-[14px] flex h-full gap-[3px]">
        <Task text="126350: Peppersto..." tone="bg-[#78d0eb]"><Logo className="ml-0.5 h-[27px] w-[27px]" /></Task>
        <Task text="3014419: ForexChi..." tone="bg-gradient-to-b from-[#c3a79b] to-[#f08d68]">
          <svg viewBox="0 0 28 28" className="h-7 w-7" aria-hidden="true"><rect width="28" height="28" rx="2" fill="#fff" /><path d="M5 12Q12 11 14 7Q17 8 22 3M5 17Q12 15 14 12Q18 12 22 8" fill="none" stroke="#ef8030" strokeWidth="2.400" /><path d="M19 15H11V26M11 20.500H18" fill="none" stroke="#222" strokeWidth="3" /></svg>
        </Task>
        <Task text="10444746: ICMark..." tone="bg-[#78d0eb]">
          <svg viewBox="0 0 28 28" className="h-7 w-7" aria-hidden="true"><rect width="28" height="28" fill="#050505" /><path d="M4 18V22M7 15V22M10 12V22" stroke="#fff" strokeWidth="2" /><path d="M14 6V20" stroke="#7ac030" strokeWidth="3" /><path d="M25 9Q22 6 19 9Q17 13 19 17Q22 20 25 17" fill="none" stroke="#7ac030" strokeWidth="2.600" /><path d="M3 23Q14 26 25 21" fill="none" stroke="#ccc" /></svg>
        </Task>
        <Task text="65083: GKFXIntern..." tone="bg-[#78d0eb]">
          <svg viewBox="0 0 28 28" className="h-7 w-7" aria-hidden="true"><rect width="28" height="28" fill="#0a0a0a" /><path d="M6 5H11L22 23H17Z" fill="#eee" /><path d="M21 5L15 13M12 16L7 23" stroke="#eee" strokeWidth="1.600" /></svg>
        </Task>
        <Task text="65206: GKFXIntern..." tone="bg-[#78d0eb]">
          <svg viewBox="0 0 28 28" className="h-7 w-7" aria-hidden="true"><path d="M0 7H17V13H28V20H0Z" fill="#34cf38" /><path d="M16 3Q12 0 10 7L7 21Q6 27 2 26M5 10H16" fill="none" stroke="#0a1a0a" strokeWidth="2.400" /><path d="M22 14Q19 11 15 15Q12 20 15 23Q19 25 22 21" fill="none" stroke="#0a1a0a" strokeWidth="2.400" /></svg>
        </Task>
        <Task text="1000052210 - Am..." tone="bg-[#a4def1]"><Logo className="h-[29px] w-[29px]" /></Task>
      </div>
      <div className="ml-auto flex items-center pr-3.5 text-[11px]">
        <button aria-label="Input language" className="mr-[15px] text-[#e6f8ff]">EN</button>
        <button aria-label="Hidden icons" className="mr-3.5"><Caret className="h-1 w-2 rotate-180" /></button>
        <svg viewBox="0 0 64 18" className="mr-3 h-[18px] w-16" fill="none" stroke="#f4fcff" aria-hidden="true">
          <path d="M2 2V17M2 3H8V5H15L13 8L15 11H8V9H2" stroke="#35708a" strokeWidth="2.600" /><path d="M2 2V17M2 3H8V5H15L13 8L15 11H8V9H2" strokeWidth="1.300" />
          <path d="M25 2H30V6H25ZM27.500 6V13H31M31 5H39V12H31ZM33 15H38M35 12V15" stroke="#35708a" strokeWidth="2.600" /><path d="M25 2H30V6H25ZM27.500 6V13H31M31 5H39V12H31ZM33 15H38M35 12V15" strokeWidth="1.300" />
          <path d="M47 7H50L54 3V15L50 11H47ZM56.500 6Q58.500 9 56.500 12M59 4Q62.500 9 59 14" stroke="#35708a" strokeWidth="2.400" /><path d="M47 7H50L54 3V15L50 11H47ZM56.500 6Q58.500 9 56.500 12M59 4Q62.500 9 59 14" strokeWidth="1.200" />
        </svg>
        <time className="text-center leading-4">05:00<br />08/07/19</time>
      </div>
    </div>
  );
}

export default function App() {
  return (
    <div className="flex h-screen flex-col overflow-hidden bg-[#f1f1f1] font-[Open_Sans,Noto_Sans,sans-serif] text-[#1c1c1c]">
      <TitleBar />
      <MenuBar />
      <Toolbar />
      <div className="flex min-h-0 flex-1 pb-[3px] pt-px">
        <aside className="mr-1 flex w-[200px] shrink-0 flex-col gap-1.5">
          <MarketWatch />
          <Navigator />
        </aside>
        <Chart />
      </div>
      <Toolbox />
      <StatusBar />
      <Taskbar />
    </div>
  );
}
